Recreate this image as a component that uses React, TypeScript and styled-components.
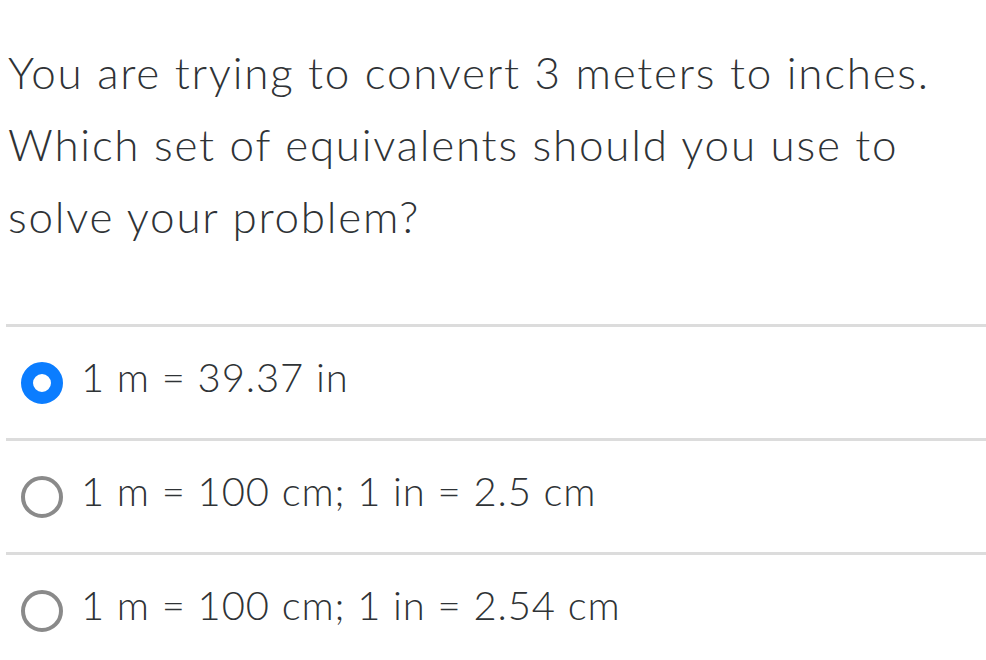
import React from "react";
import styled, { createGlobalStyle } from "styled-components";

const Global = createGlobalStyle`
  html, body { margin: 0; padding: 0; background: #ffffff; }
  body { font-family: Lato, "Open Sans", sans-serif; color: #2f3336; }
`;

const Page = styled.div`
  width: 986px;
  height: 660px;
  overflow: hidden;
  background: #fff;
`;

const Question = styled.p`
  margin: 0;
  padding: 36px 0 0 8px;
  font-size: 44px;
  font-weight: 300;
  line-height: 72px;
  letter-spacing: 1.75px;
  color: #2f3336;
`;

const Answers = styled.div`
  margin: 72px 0 0 6px;
  display: flex;
  flex-direction: column;
`;

const Row = styled.label`
  display: flex;
  align-items: center;
  height: 111px;
  border-top: 3px solid #dcdcdc;
  padding-left: 15px;
  gap: 18px;
  box-sizing: content-box;
`;

const Radio = styled.span<{ $checked?: boolean }>`
  width: 42px;
  height: 42px;
  box-sizing: border-box;
  border-radius: 50%;
  flex: none;
  background: #fff;
  border: ${(p) => (p.$checked ? "12px solid #0b7dff" : "4px solid #8a8a8a")};
`;

const AnswerText = styled.span`
  font-size: 40px;
  font-weight: 300;
  line-height: 48px;
  letter-spacing: 0.9px;
  color: #2f3336;
  margin-top: -12px;
`;

const answers = [
  { text: "1 m = 39.37 in", checked: true },
  { text: "1 m = 100 cm; 1 in = 2.5 cm", checked: false },
  { text: "1 m = 100 cm; 1 in = 2.54 cm", checked: false },
];

export default function App() {
  return (
    <Page>
      <Global />
      <Question>
        You are trying to convert 3 meters to inches.
        <br />
        Which set of equivalents should you use to
        <br />
        solve your problem?
      </Question>
      <Answers>
        {answers.map((a) => (
          <Row key={a.text}>
            <Radio $checked={a.checked} />
            <AnswerText>{a.text}</AnswerText>
          </Row>
        ))}
      </Answers>
    </Page>
  );
}
